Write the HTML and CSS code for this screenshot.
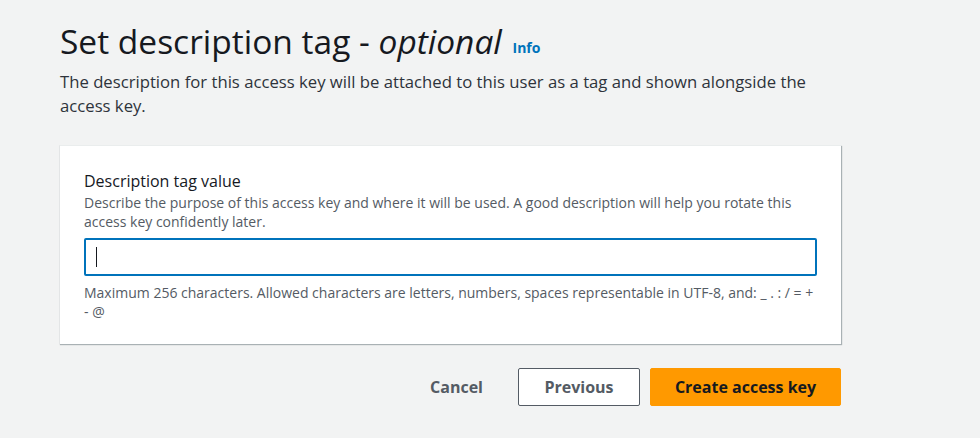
FILE: index.html
```html
<!DOCTYPE html>
<html lang="en">
<head>
<meta charset="utf-8">
<title>Set description tag</title>
<link rel="stylesheet" href="styles.css">
</head>
<body>
<main class="page">
  <header class="header">
    <h1 class="title">Set description tag - <em>optional</em> <a class="info" href="#">Info</a></h1>
    <p class="lead">The description for this access key will be attached to this user as a tag and shown alongside the access key.</p>
  </header>
  <section class="card">
    <label class="label" for="desc">Description tag value</label>
    <p class="hint">Describe the purpose of this access key and where it will be used. A good description will help you rotate this access key confidently later.</p>
    <div class="input"><span class="caret"></span></div>
    <p class="constraint">Maximum 256 characters. Allowed characters are letters, numbers, spaces representable in UTF-8, and: _ . : / = + - @</p>
  </section>
  <div class="actions">
    <button class="btn link">Cancel</button>
    <button class="btn normal">Previous</button>
    <button class="btn primary">Create access key</button>
  </div>
</main>
</body>
</html>
```

FILE: styles.css
```css
html, body {
  margin: 0;
  padding: 0;
  background: #f2f3f3;
}
body {
  font-family: "Open Sans", "Noto Sans", sans-serif;
  color: #16191f;
}
.page {
  width: 782px;
  margin-left: 59px;
  padding-top: 20px;
}
.header {
  padding-left: 1px;
}
.title {
  margin: 0;
  font-size: 33.5px;
  font-weight: 400;
  line-height: 42px;
  height: 42px;
  color: #16191f;
}
.title em {
  font-style: italic;
}
.info {
  font-size: 14px;
  line-height: 1;
  font-weight: 700;
  color: #0073bb;
  text-decoration: none;
  margin-left: 2px;
  vertical-align: 1px;
}
.lead {
  margin: 8px 0 0;
  font-size: 16.7px;
  line-height: 24px;
  color: #2e333b;
}
.card {
  margin-top: 27px;
  background: #fff;
  border-left: 1px solid #e3e5e6;
  border-top: 1px solid #eaeded;
  box-shadow: 1px 1px 1px 0 rgba(0, 28, 36, 0.3);
  padding: 24px 24px 26px 24px;
  height: 148px;
}
.label {
  display: block;
  font-size: 16px;
  line-height: 22px;
  color: #16191f;
}
.hint {
  margin: 1px 0 0;
  font-size: 14px;
  line-height: 19px;
  color: #545b64;
}
.input {
  margin-top: 7px;
  height: 34px;
  border: 2px solid #0073bb;
  border-radius: 2px;
  display: flex;
  align-items: center;
  padding-left: 10px;
}
.caret {
  width: 1px;
  height: 20px;
  background: #16191f;
}
.constraint {
  margin: 7px 0 0;
  font-size: 14px;
  line-height: 19px;
  color: #545b64;
}
.actions {
  margin-top: 24px;
  display: flex;
  justify-content: flex-end;
  align-items: center;
  gap: 10px;
}
.btn {
  font-family: inherit;
  font-size: 16px;
  font-weight: 700;
  height: 38px;
  border-radius: 2px;
  padding: 0 20px;
  cursor: pointer;
}
.link {
  background: transparent;
  border: 1px solid transparent;
  color: #545b64;
  margin-right: 4px;
}
.normal {
  background: #fff;
  border: 1px solid #545b64;
  color: #545b64;
  width: 122px;
}
.primary {
  background: #ff9900;
  border: 1px solid #ff9900;
  color: #16191f;
  width: 191px;
}
```
